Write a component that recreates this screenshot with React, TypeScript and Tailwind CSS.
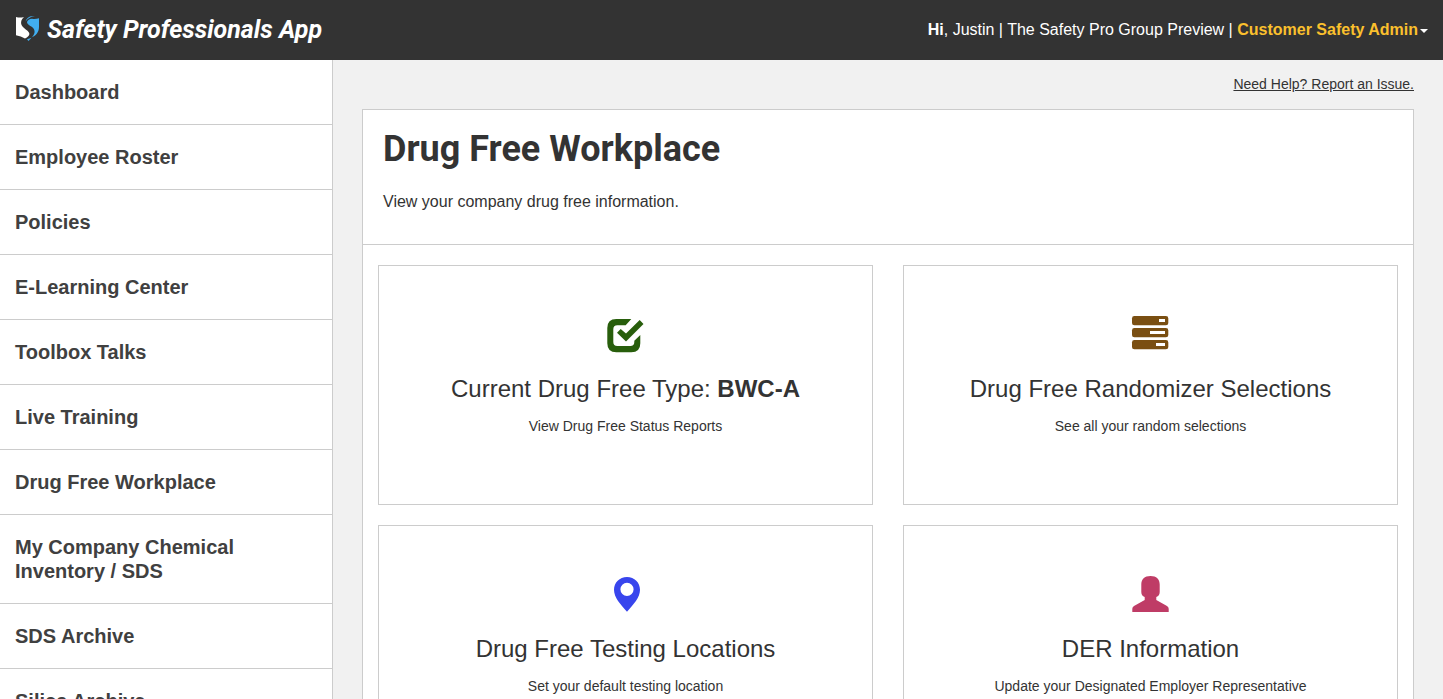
import type { ReactNode } from "react";

const navItems = [
  "Dashboard",
  "Employee Roster",
  "Policies",
  "E-Learning Center",
  "Toolbox Talks",
  "Live Training",
  "Drug Free Workplace",
  "My Company Chemical Inventory / SDS",
  "SDS Archive",
  "Silica Archive",
];

type IconProps = {
  className: string;
  children: ReactNode;
};

function TileIcon({ className, children }: IconProps) {
  return (
    <svg
      viewBox="0 0 39 40"
      fill="currentColor"
      aria-hidden="true"
      className={`h-10 w-[39px] ${className}`}
    >
      {children}
    </svg>
  );
}

function CheckIcon() {
  return (
    <TileIcon className="text-[#285e0c]">
      <path d="M10.3 4H25.3L19.7 10.3H11.3Q7.3 10.3 7.3 14.3V27Q7.3 31 11.3 31H24.3Q28.3 31 28.3 27V25.7L34.3 20V28.3Q34.3 37.3 25.3 37.3H10.3Q1.3 37.3 1.3 28.3V13Q1.3 4 10.3 4Z" />
      <path d="M11 17.7L14.7 14L20 18.4L33.7 5L37.5 9L20 26.5Z" />
    </TileIcon>
  );
}

function TasksIcon() {
  return (
    <TileIcon className="text-[#7a4f12]">
      <rect x="1" y="1" width="36.3" height="9.3" rx="2.4" />
      <rect x="1" y="13" width="36.3" height="9.3" rx="2.4" />
      <rect x="1" y="25" width="36.3" height="9.3" rx="2.4" />
      <path fill="#fff" d="M28 4H34V7H28ZM19 16H34V19H19ZM25 28H34V31H25Z" />
    </TileIcon>
  );
}

function MarkerIcon() {
  return (
    <TileIcon className="text-[#3845ed]">
      <path
        fillRule="evenodd"
        d="M21 2C28.5 2 34 7.6 34 14.8C34 22.5 27.5 29.5 21 36.8C14.5 29.5 8 22.5 8 14.8C8 7.6 13.5 2 21 2ZM21 7.7A6.6 6.6 0 1 0 21 20.9A6.6 6.6 0 1 0 21 7.7Z"
      />
    </TileIcon>
  );
}

function UserIcon() {
  return (
    <TileIcon className="text-[#bf3c66]">
      <path d="M19.5 1C25.500 1 28.700 4.400 28.700 9.500V17C28.700 19.500 27.500 21.300 25.300 22V25L36 31Q37.700 32 37.700 33.800V37H1.300V33.800Q1.300 32 3 31L13.700 25V22C11.500 21.300 10.300 19.500 10.300 17V9.500C10.300 4.400 13.500 1 19.500 1Z" />
    </TileIcon>
  );
}

function Logo() {
  return (
    <svg viewBox="-1 2 25 28" aria-hidden="true" className="h-7 w-[25px]">
      <path
        fill="#fff"
        d="M0 3Q4 4 8 3C4.500 6 4 10.500 7.500 13.500C10.500 16.300 14 18 13.300 20.500C12.800 22 11 23.600 9 24.600Q5 22.200 0 21.300Z"
      />
      <path
        fill="#41aef0"
        d="M11 8C11.500 6 13.500 5 16 4.800Q19.500 5.300 23 4.300V13C23 18.500 19.500 22 15.500 23.500C18.800 20.500 19.500 17 17.300 14.200C15 11.600 11 11 11 8Z"
      />
      <path fill="#41aef0" d="M9.500 7.500C10.500 4 14 1.500 19 2C15 2.500 12 4 9.500 7.500Z" />
      <path fill="#41aef0" d="M11 25.200L15.500 23.800L12.500 27Z" />
    </svg>
  );
}

const tiles: { icon: ReactNode; title: ReactNode; text: string }[] = [
  {
    icon: <CheckIcon />,
    title: (
      <>
        Current Drug Free Type: <strong>BWC-A</strong>
      </>
    ),
    text: "View Drug Free Status Reports",
  },
  {
    icon: <TasksIcon />,
    title: "Drug Free Randomizer Selections",
    text: "See all your random selections",
  },
  {
    icon: <MarkerIcon />,
    title: "Drug Free Testing Locations",
    text: "Set your default testing location",
  },
  {
    icon: <UserIcon />,
    title: "DER Information",
    text: "Update your Designated Employer Representative",
  },
];

function Header() {
  return (
    <header className="flex h-15 items-center justify-between bg-[#333] px-[15px] text-white">
      <a
        href="#home"
        className="flex items-center gap-[7px] font-['Roboto',sans-serif] text-[25px] leading-8 font-bold italic"
      >
        <Logo />
        Safety Professionals App
      </a>
      <div className="flex items-center text-base">
        <span className="whitespace-pre">
          <strong>Hi</strong>, Justin | The Safety Pro Group Preview |{" "}
        </span>
        <button
          type="button"
          className="flex items-center gap-[2px] font-bold text-[#fbc02d]"
        >
          Customer Safety Admin
          <span className="mt-[2px] border-x-4 border-t-4 border-x-transparent border-t-white" />
        </button>
      </div>
    </header>
  );
}

function Sidebar() {
  return (
    <nav className="w-3/13 shrink-0 border-r border-[#ccc] bg-white">
      <ul>
        {navItems.map((item) => (
          <li key={item} className="border-b border-[#ccc]">
            <a
              href="#nav"
              className="block py-5 pr-10 pl-[15px] text-xl leading-6 font-bold text-[#404040]"
            >
              {item}
            </a>
          </li>
        ))}
      </ul>
    </nav>
  );
}

export default function App() {
  return (
    <div className="min-h-screen bg-[#f1f1f1] font-['Liberation_Sans',Arial,sans-serif] text-[#333]">
      <Header />
      <div className="flex">
        <Sidebar />
        <main className="min-w-0 flex-1 px-[29px] pt-[14px] pb-8">
          <div className="text-right text-sm">
            <a href="#help" className="underline">
              Need Help? Report an Issue.
            </a>
          </div>
          <section className="mt-[15px] border border-[#ccc] bg-white">
            <div className="border-b border-[#ccc] px-5 pt-[19px] pb-[30px]">
              <h1 className="font-['Roboto',sans-serif] text-4xl font-bold">
                Drug Free Workplace
              </h1>
              <p className="mt-[21px] text-base">
                View your company drug free information.
              </p>
            </div>
            <div className="grid grid-cols-2 gap-x-[30px] gap-y-5 px-[15px] py-5">
              {tiles.map((tile) => (
                <a
                  key={tile.text}
                  href="#tile"
                  className="flex h-60 flex-col items-center border border-[#ccc] px-4 pt-[49px] text-center"
                >
                  {tile.icon}
                  <h2 className="mt-[18px] text-2xl">{tile.title}</h2>
                  <p className="mt-[11px] text-sm">{tile.text}</p>
                </a>
              ))}
            </div>
          </section>
        </main>
      </div>
    </div>
  );
}
